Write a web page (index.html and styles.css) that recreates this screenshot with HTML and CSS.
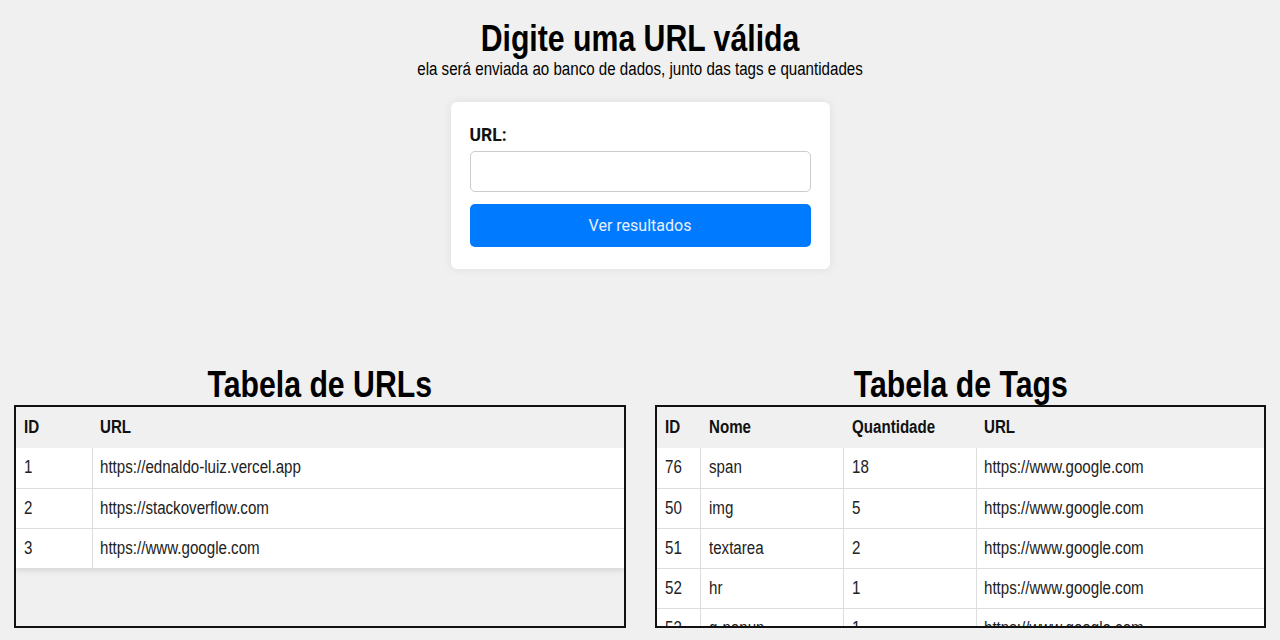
FILE: index.html
```html
<!DOCTYPE html>
<html lang="pt-BR">
<head>
<meta charset="utf-8">
<title>Digite uma URL válida</title>
<link rel="stylesheet" href="styles.css">
</head>
<body>
<header class="intro">
  <h1 class="title">Digite uma URL válida</h1>
  <p class="subtitle">ela será enviada ao banco de dados, junto das tags e quantidades</p>
</header>

<form class="card">
  <label class="field-label" for="url">URL:</label>
  <input class="field-input" id="url" type="text">
  <button class="submit" type="button">Ver resultados</button>
</form>

<main class="tables">
  <section class="panel">
    <h2 class="panel-title">Tabela de URLs</h2>
    <div class="box">
      <table class="grid urls">
        <thead>
          <tr><th class="c-id"><span class="n">ID</span></th><th><span class="n">URL</span></th></tr>
        </thead>
        <tbody>
          <tr><td class="c-id"><span class="n">1</span></td><td><span class="n">https://ednaldo-luiz.vercel.app</span></td></tr>
          <tr><td class="c-id"><span class="n">2</span></td><td><span class="n">https://stackoverflow.com</span></td></tr>
          <tr><td class="c-id"><span class="n">3</span></td><td><span class="n">https://www.google.com</span></td></tr>
        </tbody>
      </table>
    </div>
  </section>

  <section class="panel">
    <h2 class="panel-title">Tabela de Tags</h2>
    <div class="box">
      <table class="grid tags">
        <thead>
          <tr><th class="t-id"><span class="n">ID</span></th><th class="t-name"><span class="n">Nome</span></th><th class="t-qty"><span class="n">Quantidade</span></th><th><span class="n">URL</span></th></tr>
        </thead>
        <tbody>
          <tr><td class="t-id"><span class="n">76</span></td><td class="t-name"><span class="n">span</span></td><td class="t-qty"><span class="n">18</span></td><td><span class="n">https://www.google.com</span></td></tr>
          <tr><td class="t-id"><span class="n">50</span></td><td class="t-name"><span class="n">img</span></td><td class="t-qty"><span class="n">5</span></td><td><span class="n">https://www.google.com</span></td></tr>
          <tr><td class="t-id"><span class="n">51</span></td><td class="t-name"><span class="n">textarea</span></td><td class="t-qty"><span class="n">2</span></td><td><span class="n">https://www.google.com</span></td></tr>
          <tr><td class="t-id"><span class="n">52</span></td><td class="t-name"><span class="n">hr</span></td><td class="t-qty"><span class="n">1</span></td><td><span class="n">https://www.google.com</span></td></tr>
          <tr><td class="t-id"><span class="n">53</span></td><td class="t-name"><span class="n">g-popup</span></td><td class="t-qty"><span class="n">1</span></td><td><span class="n">https://www.google.com</span></td></tr>
        </tbody>
      </table>
    </div>
  </section>
</main>
</body>
</html>
```

FILE: styles.css
```css
* { box-sizing: border-box; }

body {
  margin: 0;
  background: #f0f0f0;
  color: #000;
  font-family: "Liberation Sans", Arial, sans-serif;
  font-size: 18px;
}

/* Arial-Narrow look: Liberation Sans condensed horizontally */
.title,
.subtitle,
.panel-title {
  transform: scaleX(0.84);
}

.n {
  display: inline-block;
  transform: scaleX(0.84);
  transform-origin: left center;
}

.intro {
  text-align: center;
  padding-top: 18px;
}

.title {
  margin: 0;
  font-size: 36px;
  line-height: 41px;
  font-weight: bold;
}

.subtitle {
  margin: 0;
  font-size: 18px;
  line-height: 20px;
}

.card {
  width: 379px;
  margin: 23px auto 0;
  padding: 22px 19px 22px;
  background: #fff;
  border-radius: 6px;
  box-shadow: 0 0 10px rgba(0, 0, 0, 0.08);
  display: flex;
  flex-direction: column;
  font-family: Roboto, "Noto Sans", sans-serif;
}

.field-label {
  font-size: 17.5px;
  font-weight: bold;
  line-height: 22px;
  color: #111;
  margin-bottom: 5px;
}

.field-input {
  height: 41px;
  border: 1px solid #ccc;
  border-radius: 5px;
  background: #fff;
  margin: 0 0 12px;
  font-size: 16px;
}

.submit {
  height: 43px;
  border: 0;
  border-radius: 5px;
  background: #007bff;
  color: #e8f0ff;
  font-family: Roboto, "Noto Sans", sans-serif;
  font-size: 16px;
}

.tables {
  display: grid;
  grid-template-columns: 1fr 1fr;
  gap: 29px;
  padding: 0 14px;
  margin-top: 96px;
}

.panel-title {
  margin: 0;
  text-align: center;
  font-size: 36px;
  line-height: 40px;
  font-weight: bold;
}

.box {
  height: 223px;
  border: 2px solid #111;
  overflow: hidden;
}

.grid {
  width: 100%;
  border-collapse: collapse;
  table-layout: fixed;
  background: transparent;
  box-shadow: 0 3px 5px rgba(0, 0, 0, 0.1);
}

.grid th,
.grid td {
  text-align: left;
  padding: 0 8px;
  white-space: nowrap;
  overflow: hidden;
}

.grid th {
  height: 41px;
  font-weight: bold;
  color: #111;
}

.grid td {
  height: 40px;
  background: #fff;
  color: #222;
  border-top: 1px solid #ddd;
  border-left: 1px solid #ddd;
}

.grid tbody tr:first-child td { border-top: 0; }
.grid td:first-child { border-left: 0; }

.urls .c-id { width: 76px; }
.urls td:nth-child(2) { padding-left: 7px; }

.tags .t-id { width: 44px; }
.tags .t-name { width: 143px; }
.tags .t-qty { width: 133px; }
.tags td:nth-child(4),
.tags th:nth-child(4) { padding-left: 7px; }
```
